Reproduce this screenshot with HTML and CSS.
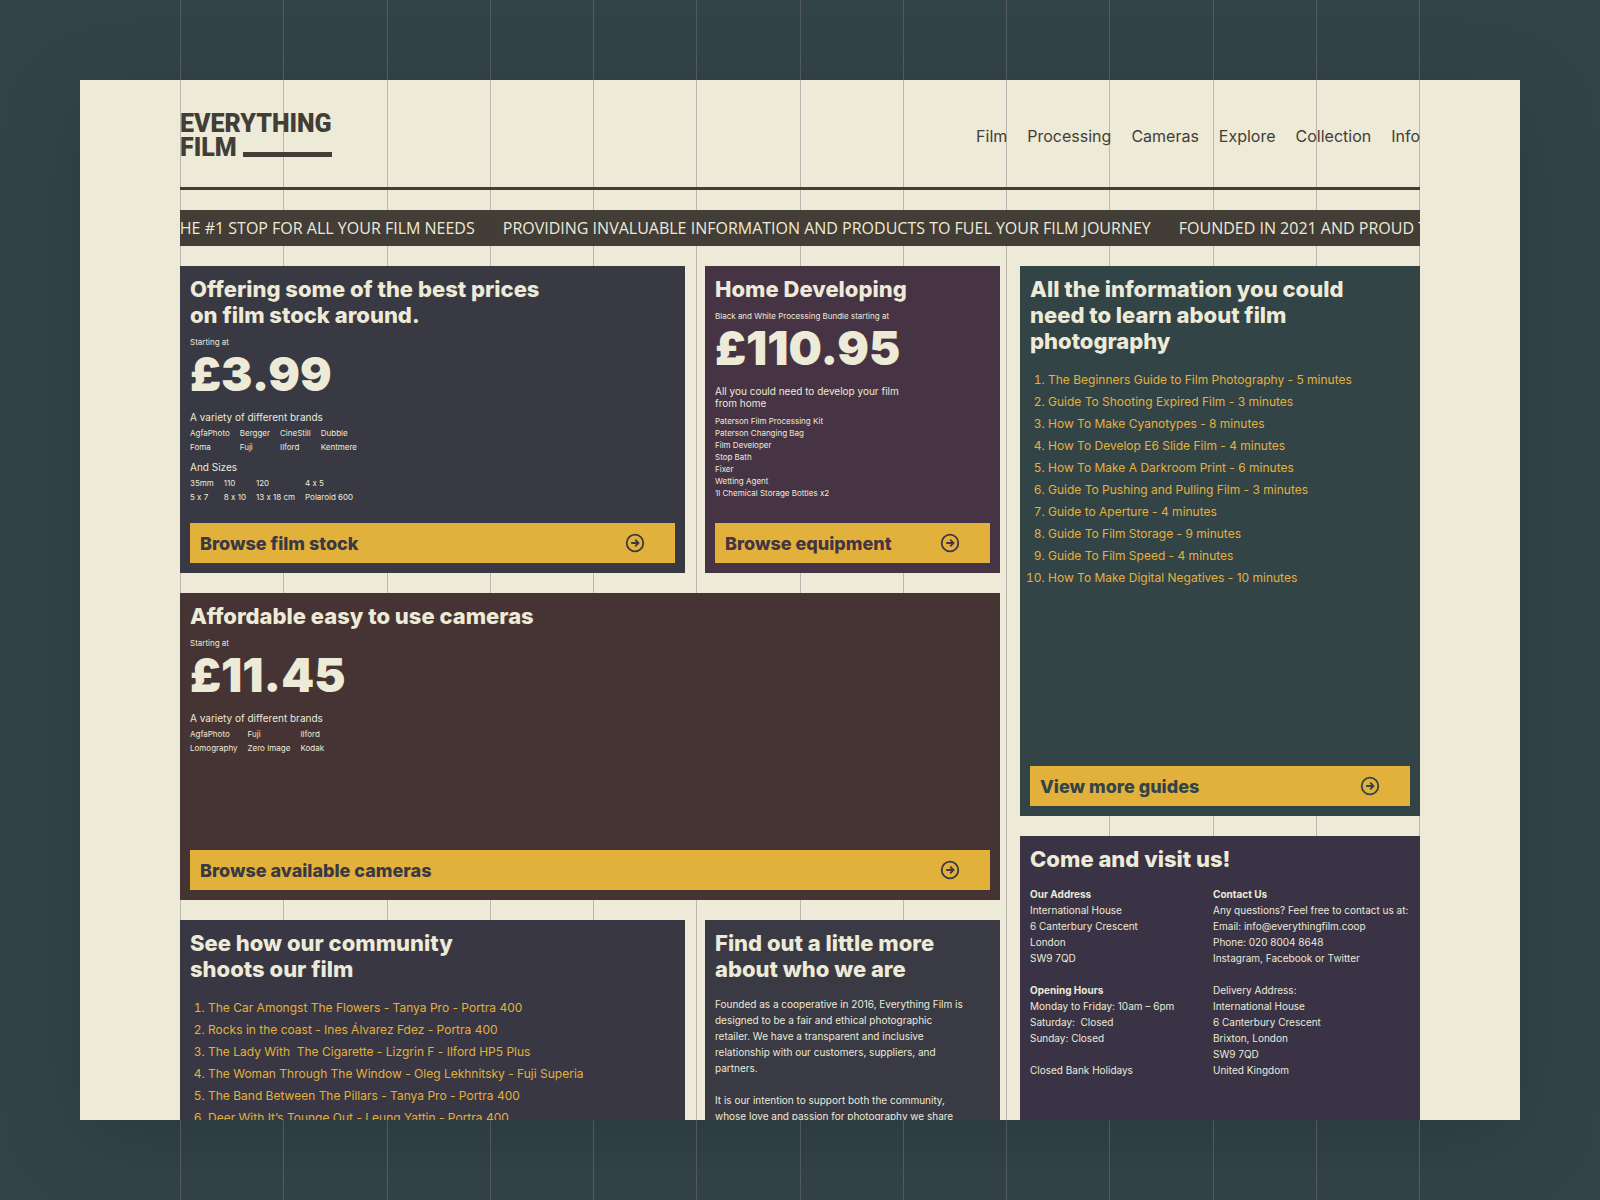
FILE: index.html
```
<!DOCTYPE html>
<html lang="en">
<head>
  <meta charset="UTF-8" />
  <meta name="viewport" content="width=device-width, initial-scale=1.0"/>
  <title>Everything Film</title>

  <link rel="stylesheet" href="styles.css">
</head>

<body>
  <svg class="sprite" aria-hidden="true">
    <symbol id="arrow" viewBox="0 0 20 20">
      <circle cx="10" cy="10" r="8.3" />
      <path d="M6.2 10h7M10.2 6.7l3.3 3.3-3.3 3.3" />
    </symbol>
  </svg>

  <div class="page">
    <header class="header">
      <a class="logo" href="#">
        <span>EVERYTHING</span>
        <span class="logo-row">FILM <span class="logo-bar"></span></span>
      </a>
      <nav class="nav">
        <a href="#">Film</a>
        <a href="#">Processing</a>
        <a href="#">Cameras</a>
        <a href="#">Explore</a>
        <a href="#">Collection</a>
        <a href="#">Info</a>
      </nav>
    </header>

    <div class="ticker">
      <div class="ticker-track">
        <span>THE #1 STOP FOR ALL YOUR FILM NEEDS</span>
        <span>PROVIDING INVALUABLE INFORMATION AND PRODUCTS TO FUEL YOUR FILM JOURNEY</span>
        <span>FOUNDED IN 2021 AND PROUD TO</span>
      </div>
    </div>

    <main class="board">
      <div class="board-left">
        <section class="card card-stock">
          <h2>Offering some of the best prices<br>on film stock around.</h2>
          <p class="tiny">Starting at</p>
          <p class="price">£3.99</p>
          <h3>A variety of different brands</h3>
          <ul class="options">
            <li>AgfaPhoto</li>
            <li>Bergger</li>
            <li>CineStill</li>
            <li>Dubble</li>
            <li>Foma</li>
            <li>Fuji</li>
            <li>Ilford</li>
            <li>Kentmere</li>
          </ul>
          <h3 class="next">And Sizes</h3>
          <ul class="options">
            <li>35mm</li>
            <li>110</li>
            <li>120</li>
            <li>4 x 5</li>
            <li>5 x 7</li>
            <li>8 x 10</li>
            <li>13 x 18 cm</li>
            <li>Polaroid 600</li>
          </ul>
          <a class="btn" href="#">Browse film stock <svg class="icon"><use href="#arrow" /></svg></a>
        </section>

        <section class="card card-developing">
          <h2>Home Developing</h2>
          <p class="tiny">Black and White Processing Bundle starting at</p>
          <p class="price">£110.95</p>
          <h3>All you could need to develop your film<br>from home</h3>
          <ul class="kit">
            <li>Paterson Film Processing Kit</li>
            <li>Paterson Changing Bag</li>
            <li>Film Developer</li>
            <li>Stop Bath</li>
            <li>Fixer</li>
            <li>Wetting Agent</li>
            <li>1l Chemical Storage Bottles x2</li>
          </ul>
          <a class="btn" href="#">Browse equipment <svg class="icon"><use href="#arrow" /></svg></a>
        </section>

        <section class="card card-cameras">
          <h2>Affordable easy to use cameras</h2>
          <p class="tiny">Starting at</p>
          <p class="price">£11.45</p>
          <h3>A variety of different brands</h3>
          <ul class="options options-three">
            <li>AgfaPhoto</li>
            <li>Fuji</li>
            <li>Ilford</li>
            <li>Lomography</li>
            <li>Zero Image</li>
            <li>Kodak</li>
          </ul>
          <a class="btn" href="#">Browse available cameras <svg class="icon"><use href="#arrow" /></svg></a>
        </section>

        <section class="card card-community">
          <h2>See how our community<br>shoots our film</h2>
          <ol class="links">
            <li><a href="#">The Car Amongst The Flowers - Tanya Pro - Portra 400</a></li>
            <li><a href="#">Rocks in the coast - Ines Álvarez Fdez - Portra 400</a></li>
            <li><a href="#">The Lady With&nbsp; The Cigarette - Lizgrin F - Ilford HP5 Plus</a></li>
            <li><a href="#">The Woman Through The Window - Oleg Lekhnitsky - Fuji Superia</a></li>
            <li><a href="#">The Band Between The Pillars - Tanya Pro - Portra 400</a></li>
            <li><a href="#">Deer With It’s Tounge Out - Leung Yattin - Portra 400</a></li>
          </ol>
        </section>

        <section class="card card-about">
          <h2>Find out a little more<br>about who we are</h2>
          <div class="copy">
            <p>Founded as a cooperative in 2016, Everything Film is designed to be a fair and ethical photographic retailer. We have a transparent and inclusive relationship with our customers, suppliers, and partners.</p>
            <p>It is our intention to support both the community, whose love and passion for photography we share</p>
          </div>
        </section>
      </div>

      <div class="board-right">
        <section class="card card-guides">
          <h2>All the information you could<br>need to learn about film<br>photography</h2>
          <ol class="links">
            <li><a href="#">The Beginners Guide to Film Photography - 5 minutes</a></li>
            <li><a href="#">Guide To Shooting Expired Film - 3 minutes</a></li>
            <li><a href="#">How To Make Cyanotypes - 8 minutes</a></li>
            <li><a href="#">How To Develop E6 Slide Film - 4 minutes</a></li>
            <li><a href="#">How To Make A Darkroom Print - 6 minutes</a></li>
            <li><a href="#">Guide To Pushing and Pulling Film - 3 minutes</a></li>
            <li><a href="#">Guide to Aperture - 4 minutes</a></li>
            <li><a href="#">Guide To Film Storage - 9 minutes</a></li>
            <li><a href="#">Guide To Film Speed - 4 minutes</a></li>
            <li><a href="#">How To Make Digital Negatives - 10 minutes</a></li>
          </ol>
          <a class="btn" href="#">View more guides <svg class="icon"><use href="#arrow" /></svg></a>
        </section>

        <section class="card card-visit">
          <h2>Come and visit us!</h2>
          <div class="visit">
            <div>
              <h3>Our Address</h3>
              <p>International House<br>6 Canterbury Crescent<br>London<br>SW9 7QD</p>
              <h3>Opening Hours</h3>
              <p>Monday to Friday: 10am – 6pm<br>Saturday:&nbsp; Closed<br>Sunday: Closed</p>
              <p>Closed Bank Holidays</p>
            </div>
            <div>
              <h3>Contact Us</h3>
              <p>Any questions? Feel free to contact us at:<br>Email: info@everythingfilm.coop<br>Phone: 020 8004 8648<br>Instagram, Facebook or Twitter</p>
              <p>Delivery Address:<br>International House<br>6 Canterbury Crescent<br>Brixton, London<br>SW9 7QD<br>United Kingdom</p>
            </div>
          </div>
        </section>
      </div>
    </main>
  </div>

  <!-- column guides, drawn over the page background but under its content -->
  <div class="guides">
    <i></i><i></i><i></i><i></i><i></i><i></i><i></i><i></i><i></i><i></i><i></i><i></i>
  </div>
</body>
</html>
```
FILE: styles.css
```
* {
  box-sizing: border-box;
}

body {
  margin: 0;
  height: 100vh;
  padding: 80px;
  overflow: hidden;
  position: relative;
  background: #334448;
  color: #edead7;
  font-family: Inter, sans-serif;
  /* keeps "4 x 5" from turning into a multiplication sign */
  font-feature-settings: "calt" 0;
}

h2,
h3,
p,
ul,
ol {
  margin: 0;
  padding: 0;
}

ul {
  list-style: none;
}

a {
  color: inherit;
  text-decoration: none;
}

.sprite {
  display: none;
}

.page {
  height: 100%;
  padding: 0 100px;
  overflow: hidden;
  background: #edead7;
  box-shadow: 0 20px 80px rgba(0, 0, 0, 0.17);
}

.header,
.ticker,
.board {
  position: relative;
  z-index: 2;
}

.guides {
  position: absolute;
  inset: 0;
  z-index: 1;
  margin: 0 180px;
  display: grid;
  grid-template-columns: repeat(12, 1fr);
  border-right: 1px solid rgba(126, 120, 128, 0.45);
  pointer-events: none;
}

.guides i {
  border-left: 1px solid rgba(126, 120, 128, 0.45);
}

/* header */
.header {
  display: flex;
  justify-content: space-between;
  align-items: center;
  padding: 32px 0 27px;
  border-bottom: 3px solid #433d37;
  color: #433d37;
}

.logo {
  display: flex;
  flex-direction: column;
  font-family: Roboto, sans-serif;
  font-size: 25px;
  font-weight: 900;
  line-height: 24px;
}

.logo-row {
  display: flex;
  gap: 6px;
}

.logo-bar {
  flex: 1;
  height: 5px;
  margin-bottom: 3px;
  align-self: flex-end;
  background: #433d37;
}

.nav {
  display: flex;
  gap: 20px;
  font-size: 16px;
}

/* ticker */
.ticker {
  margin-top: 20px;
  overflow: hidden;
  background: #433d37;
}

.ticker-track {
  display: flex;
  gap: 28px;
  margin-left: -9px;
  font-family: "Open Sans", sans-serif;
  font-size: 16px;
  line-height: 36px;
  white-space: nowrap;
}

/* cards */
.board {
  display: grid;
  grid-template-columns: 820fr 400fr;
  gap: 20px;
  margin-top: 20px;
}

.board-left {
  display: grid;
  grid-template-columns: 505fr 295fr;
  grid-auto-rows: minmax(307px, auto);
  gap: 20px;
}

.board-right {
  display: flex;
  flex-direction: column;
  gap: 20px;
}

.card {
  display: flex;
  flex-direction: column;
  padding: 10px;
}

.card h2 {
  font-size: 22px;
  font-weight: 800;
  line-height: 26px;
}

.card h3 {
  font-size: 10px;
  font-weight: 400;
  line-height: 12px;
}

.card-stock {
  background: #383943;
}

.card-developing {
  background: #463344;
}

.card-cameras {
  grid-column: 1 / -1;
  background: #463434;
}

.card-community {
  background: #383743;
}

.card-about {
  background: #393a43;
}

.card-guides {
  min-height: 550px;
  background: #334447;
}

.card-visit {
  flex: 1;
  background: #393345;
}

.tiny {
  margin-top: 8px;
  font-size: 8px;
  line-height: 12px;
}

.price {
  margin-bottom: 11px;
  font-size: 47px;
  font-weight: 900;
  line-height: 52px;
}

.options {
  display: grid;
  grid-template-columns: repeat(4, max-content);
  gap: 2px 10px;
  margin-top: 4px;
  font-size: 8px;
  line-height: 12px;
}

.options-three {
  grid-template-columns: repeat(3, max-content);
}

.card .next {
  margin-top: 8px;
}

.kit {
  margin-top: 6px;
  font-size: 8px;
  line-height: 12px;
}

.links {
  margin-top: 15px;
  padding-left: 18px;
  color: #e2b13c;
  font-size: 12px;
  line-height: 22px;
}

.btn {
  display: flex;
  justify-content: space-between;
  align-items: center;
  height: 40px;
  margin-top: auto;
  padding: 0 30px 0 10px;
  background: #e2b13c;
  color: #383943;
  font-size: 18px;
  font-weight: 800;
}

.card-developing .btn {
  color: #463344;
}

.card-guides .btn {
  color: #334447;
}

.icon {
  width: 20px;
  height: 20px;
  fill: none;
  stroke: currentColor;
  stroke-width: 1.8;
}

.copy {
  max-width: 255px;
  margin-top: 14px;
  font-size: 10px;
  line-height: 16px;
}

.copy p + p {
  margin-top: 16px;
}

.visit {
  display: grid;
  grid-template-columns: 183fr 197fr;
  margin-top: 14px;
  font-size: 10px;
  line-height: 16px;
  white-space: nowrap;
}

.visit h3 {
  font-weight: 700;
  line-height: 16px;
}

.visit p + h3,
.visit p + p {
  margin-top: 16px;
}
```
